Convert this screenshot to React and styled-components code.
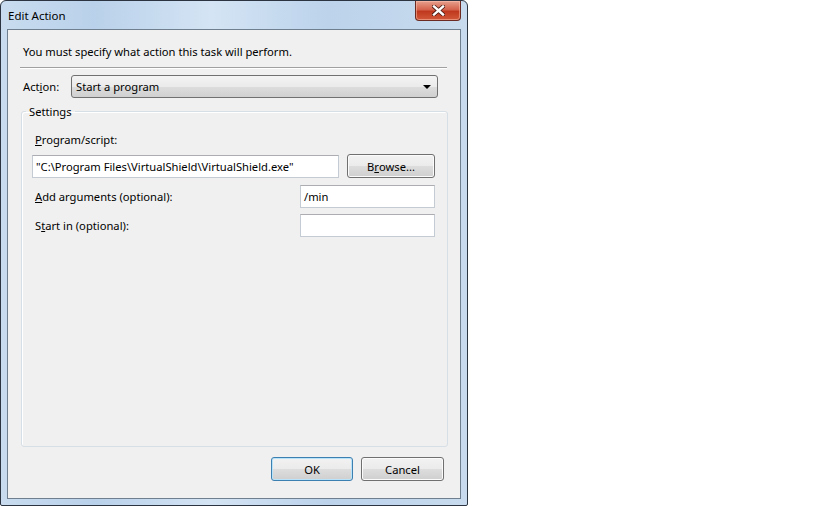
import styled, { createGlobalStyle } from 'styled-components';

const GlobalStyle = createGlobalStyle`
  html, body {
    margin: 0;
    padding: 0;
    background: #fff;
  }
  body {
    font-family: "Noto Sans", "Liberation Sans", sans-serif;
    font-size: 11.2px;
    line-height: 15px;
    color: #000;
  }
`

const Page = styled.div`
  width: 819px;
  height: 506px;
  display: flex;
  background: #fff;
`

const Window = styled.div`
  width: 468px;
  height: 506px;
  box-sizing: border-box;
  border: 1px solid #2b3440;
  border-radius: 6px 6px 2px 2px;
  background: linear-gradient(90deg, #c9dcef 0%, #b9d1ea 20%, #d4e4f4 45%, #bcd3eb 70%, #c8dbee 100%);
  display: flex;
  flex-direction: column;
  padding: 0 6px 6px 6px;
`

const TitleBar = styled.div`
  height: 28px;
  display: flex;
  align-items: flex-start;
  justify-content: space-between;
`

const Title = styled.div`
  padding: 7px 0 0 1px;
  font-size: 11.5px;
  color: #000;
`

const CloseButton = styled.div`
  width: 46px;
  height: 20px;
  box-sizing: border-box;
  border: 1px solid #6b2a22;
  border-top: none;
  border-radius: 0 0 4px 4px;
  background: linear-gradient(180deg, #e6a08e 0%, #d4634d 45%, #c0391f 55%, #d2583a 100%);
  display: flex;
  align-items: center;
  justify-content: center;
  box-shadow: inset 0 0 0 1px rgba(255, 200, 180, 0.5);
`

const Client = styled.div`
  flex: 1;
  box-sizing: border-box;
  border: 1px solid #6f7f90;
  background: #f0f0f0;
  display: flex;
  flex-direction: column;
  padding: 10px 13px 0 12px;
`

const Intro = styled.div`
  padding: 4px 0 0 3px;
  height: 27px;
  box-sizing: border-box;
`

const Separator = styled.div`
  height: 1px;
  background: #a0a0a0;
  border-bottom: 1px solid #fff;
`

const ActionRow = styled.div`
  display: flex;
  align-items: center;
  gap: 8px;
  margin-top: 6px;
  padding-left: 3px;
`

const Label = styled.label`
  white-space: nowrap;
  width: ${p => (p.$width ? `${p.$width}px` : 'auto')};
  u {
    text-decoration: underline;
  }
`

const Combo = styled.div`
  flex: 1;
  height: 23px;
  box-sizing: border-box;
  margin-right: 9px;
  border: 1px solid #707070;
  border-radius: 3px;
  background: linear-gradient(180deg, #f3f3f3 0%, #ebebeb 50%, #dddddd 51%, #d0d0d0 100%);
  display: flex;
  align-items: center;
  justify-content: space-between;
  padding: 0 6px 0 4px;
`

const Arrow = styled.div`
  width: 0;
  height: 0;
  border-left: 4px solid transparent;
  border-right: 4px solid transparent;
  border-top: 4px solid #000;
`

const Group = styled.fieldset`
  margin: 6px 4px 0 1px;
  height: 343px;
  box-sizing: border-box;
  border: 1px solid #d5dfe5;
  border-radius: 3px;
  padding: 12px 12px 0 10px;
  display: flex;
  flex-direction: column;
  box-shadow: inset 1px 1px 0 #fff;
`

const Legend = styled.legend`
  padding: 0 3px;
  margin-left: -6px;
`

const FieldLabel = styled(Label)`
  display: block;
  padding-left: 3px;
  margin-top: 1px;
`

const ProgramRow = styled.div`
  display: flex;
  align-items: center;
  gap: 8px;
  margin-top: 7px;
`

const TextBox = styled.div`
  width: ${p => p.$width}px;
  height: 23px;
  box-sizing: border-box;
  border: 1px solid #c5cbd2;
  border-top-color: #abadb3;
  background: #fff;
  display: flex;
  align-items: center;
  padding-left: 3px;
  white-space: nowrap;
  overflow: hidden;
`

const OptionRow = styled.div`
  display: flex;
  align-items: center;
  justify-content: space-between;
  margin-top: ${p => p.$top}px;
  padding-left: 3px;
`

const Button = styled.button`
  width: ${p => p.$width}px;
  height: 24px;
  box-sizing: border-box;
  font: inherit;
  color: #000;
  border: 1px solid ${p => (p.$primary ? '#3c7fb1' : '#707070')};
  border-radius: 3px;
  background: linear-gradient(180deg, #f2f2f2 0%, #ebebeb 50%, #dddddd 51%, #cfcfcf 100%);
  box-shadow: inset 0 0 0 1px ${p => (p.$primary ? '#b8e3f9' : '#fbfbfb')};
  padding: 0;
  display: flex;
  align-items: center;
  justify-content: center;
`

const Footer = styled.div`
  display: flex;
  justify-content: flex-end;
  gap: 8px;
  margin-top: 10px;
  padding-right: 3px;
`

export default function App() {
  return (
    <>
      <GlobalStyle />
      <Page>
        <Window>
          <TitleBar>
            <Title>Edit Action</Title>
            <CloseButton>
              <svg width="13" height="11" viewBox="0 0 13 11">
                <path d="M2 1.5 L11 9.5 M11 1.5 L2 9.5" stroke="#4a1a12" strokeWidth="4" strokeLinecap="square" />
                <path d="M2 1.5 L11 9.5 M11 1.5 L2 9.5" stroke="#fff" strokeWidth="2.4" strokeLinecap="square" />
              </svg>
            </CloseButton>
          </TitleBar>
          <Client>
            <Intro>You must specify what action this task will perform.</Intro>
            <Separator />
            <ActionRow>
              <Label $width={40}>Act<u>i</u>on:</Label>
              <Combo>
                <span>Start a program</span>
                <Arrow />
              </Combo>
            </ActionRow>
            <Group>
              <Legend>Settings</Legend>
              <FieldLabel><u>P</u>rogram/script:</FieldLabel>
              <ProgramRow>
                <TextBox $width={307}>"C:\Program Files\VirtualShield\VirtualShield.exe"</TextBox>
                <Button $width={88}>B<u>r</u>owse...</Button>
              </ProgramRow>
              <OptionRow $top={7}>
                <Label><u>A</u>dd arguments (optional):</Label>
                <TextBox $width={135}>/min</TextBox>
              </OptionRow>
              <OptionRow $top={6}>
                <Label>S<u>t</u>art in (optional):</Label>
                <TextBox $width={135} />
              </OptionRow>
            </Group>
            <Footer>
              <Button $width={82} $primary>OK</Button>
              <Button $width={83}>Cancel</Button>
            </Footer>
          </Client>
        </Window>
      </Page>
    </>
  );
}
